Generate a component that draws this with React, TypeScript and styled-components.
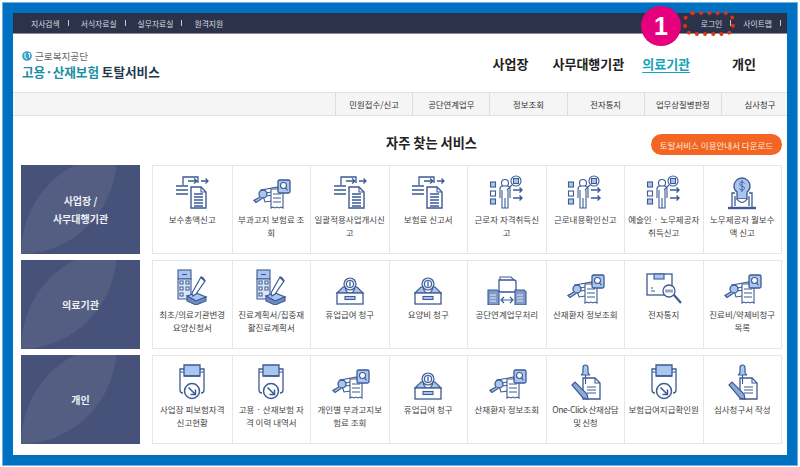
import { FC, ReactNode } from 'react';
import styled, { createGlobalStyle } from 'styled-components';

const INK = '#3d5a94';
const SOFT = '#a8c6f0';

const GlobalStyle = createGlobalStyle`
  html, body {
    margin: 0;
    padding: 0;
    background: #ffffff;
    font-family: 'Noto Sans CJK KR', 'Noto Sans', sans-serif;
  }
  * { box-sizing: border-box; }
`;

const IconSvg: FC<{ children: ReactNode }> = ({ children }) => (
  <svg width="40" height="36" viewBox="0 0 40 36" fill="none" stroke={INK} strokeWidth="1.1">
    {children}
  </svg>
);

const DocsArrow = () => (
  <IconSvg>
    <path d="M11 11V3h15v6" strokeWidth="1.3" />
    <path d="M19 13h10l5 5v16H19z" fill="#fff" strokeWidth="1.4" />
    <path d="M29 13v5h5" />
    <path d="M22 20h9M22 23h9M22 26h9M22 29h9M22 32h9" strokeWidth="1.5" />
    <path d="M4 12h12M4 16h12M4 20h12" strokeWidth="1.5" />
    <path d="M16 7h9m-3-2.500 3 2.500-3 2.500M29 7h7m-2.500-2.500 2.500 2.500-2.500 2.500" strokeWidth="1.3" />
  </IconSvg>
);

const KeyDoc = () => (
  <IconSvg>
    <path d="M10 16l17-3v13l-13 2z" fill="#fff" />
    <path d="M15 19l8-1.500M16 22l8-1.500" />
    <path d="M20 15h12v19l-2-1-2 1-2-1-2 1-2-1-2 1z" fill="#fff" />
    <path d="M22 20h8M22 24h8M22 28h8" />
    <rect x="27" y="6" width="12" height="13" rx="1.500" fill={SOFT} strokeWidth="1.300" />
    <circle cx="32.500" cy="11.500" r="3" fill="#fff" />
    <path d="M34.500 13.800l2 2.500" />
    <circle cx="12" cy="20" r="4" fill={SOFT} strokeWidth="1.300" />
    <path d="M9 23l-6 3.500 2 2 6-4" fill={SOFT} strokeWidth="1.300" />
  </IconSvg>
);

const PersonFlow = () => (
  <IconSvg>
    <rect x="3.500" y="8" width="5" height="5" fill={SOFT} />
    <rect x="3.500" y="17" width="5" height="5" fill="#fff" />
    <rect x="3.500" y="25" width="5" height="5" fill={SOFT} />
    <circle cx="18" cy="9" r="3.500" fill="#fff" />
    <path d="M13 24v-9q0-3 3-3h4q3 0 3 3v9M15 16v18h3V24v10h3V16" fill="#fff" />
    <circle cx="29" cy="7" r="5" fill="#fff" />
    <rect x="26.500" y="4.500" width="5" height="5" fill={SOFT} />
    <path d="M25 11l-5 5" />
    <path d="M26 16h9m-2.500-2.500 2.500 2.500-2.500 2.500M26 24h9m-2.500-2.500 2.500 2.500-2.500 2.500" strokeWidth="1.400" />
  </IconSvg>
);

const MoneyBulb = () => (
  <IconSvg>
    <path d="M6 34h28" strokeWidth="2.400" />
    <path d="M10 33V19h3M30 33V19h-3M13 22v10M27 22v10" fill="#fff" strokeWidth="1.300" />
    <path d="M12 12a8 8 0 1 1 16 0q0 4-3 6v7H15v-7q-3-2-3-6z" fill={SOFT} strokeWidth="1.300" />
    <path d="M15 25q5 7 10 0" fill="#fff" />
    <path d="M22.500 9.500q-.5-1.500-2.500-1.500t-2.500 1.500 2.500 2.500 2.500 2.500-2.500 1.500-2.500-1.500M20 6v12" strokeWidth=".9" />
  </IconSvg>
);

const Building = () => (
  <IconSvg>
    <rect x="6" y="1" width="13" height="9" fill={SOFT} />
    <path d="M10 5.500h5" />
    <path d="M6 10h13v20H6z" fill="#dbe6f6" />
    <path d="M8 12h3v3H8zM14 12h3v3h-3zM8 18h3v3H8zM14 18h3v3h-3zM8 24h3v3H8z" fill="#fff" />
    <path d="M15 27l9-3 10 4-10 4z" fill={SOFT} strokeWidth="1.200" />
    <path d="M15 27v5l9 4 10-4v-4l-10 4z" fill="#6e8cc2" />
    <path d="M20 24l1 3 3-2 9-13-2-3-2-1z" fill="#fff" strokeWidth="1.200" />
    <path d="M29 8l4 4" fill="none" strokeWidth="1.800" />
  </IconSvg>
);

const CoinBox = () => (
  <IconSvg>
    <circle cx="20" cy="15" r="6" fill="#dbe6f6" strokeWidth="1.200" />
    <circle cx="20" cy="15" r="3.500" fill="#fff" />
    <path d="M20 12.500v5" strokeWidth="1.300" />
    <path d="M7 24l6-6h2q1 6 5 6t5-6h2l6 6z" fill={SOFT} strokeWidth="1.200" />
    <rect x="7" y="24" width="26" height="11" fill="#fff" strokeWidth="1.300" />
    <rect x="15" y="27.500" width="10" height="3" fill={SOFT} />
  </IconSvg>
);

const FolderSwap = () => (
  <IconSvg>
    <g transform="translate(0 5)">
      <path d="M13 15V3h11l3 3v9" fill="#fff" />
      <path d="M12 6h15q2 0 2 2v8q0 2-2 2H14q-2 0-2-2z" fill="#fff" strokeWidth="1.300" />
      <path d="M1 16h9l2 2v13H1z" fill="#7e9bcb" />
      <path d="M28 16h9l2 2v13H28z" fill="#7e9bcb" />
      <path d="M3 21h6M3 24h6M3 27h6M30 21h6M30 24h6M30 27h6" stroke="#fff" strokeWidth=".8" />
      <path d="M15 26h10m-8-3-3 3 3 3m6-6 3 3-3 3" strokeWidth="1.200" />
    </g>
  </IconSvg>
);

const ParcelSearch = () => (
  <IconSvg>
    <rect x="3" y="5" width="25" height="21" fill="#fff" strokeWidth="1.300" />
    <rect x="10" y="5" width="10" height="5" fill={SOFT} />
    <path d="M7 22h4M7 19h2" />
    <path d="M30 26l7 8" strokeWidth="2.200" />
    <circle cx="25" cy="22" r="6" fill="#fff" strokeWidth="1.300" />
    <path d="M22 20.500v3M24 20.500v3M26 20.500v3M28 20.500v3" />
  </IconSvg>
);

const PrinterArrow = () => (
  <IconSvg>
    <path d="M12 1h16v11H12z" fill={SOFT} strokeWidth="1.300" />
    <path d="M12 5H8v21q0 3 3 3M28 5h4v21q0 3-3 3" strokeWidth="1.300" />
    <path d="M8 8h4M28 8h4" />
    <path d="M12 12h16" strokeWidth="1.300" />
    <circle cx="20" cy="27" r="7.500" fill="#fff" strokeWidth="1.500" />
    <path d="M16.500 23.500l7 7m0-5v5h-5" strokeWidth="1.500" />
  </IconSvg>
);

const PinDoc = () => (
  <IconSvg>
    <path d="M18 14h12l5 5v16H18z" fill="#fff" strokeWidth="1.300" />
    <path d="M30 14v5h5" />
    <path d="M22 23h9M22 26h9M22 29h9" />
    <path d="M16 11q2-1 2-3V4q0-3 2.500-3T23 4v4q0 2 2 3z" fill={SOFT} strokeWidth="1.200" />
    <path d="M20.500 11v9" />
    <path d="M7 21l3-3 12 12 1 5-5-1z" fill="#8ea9d6" strokeWidth="1.200" />
  </IconSvg>
);

type ServiceItem = { icon: FC; label: string; tight?: boolean };
type ServiceGroup = { title: string[]; items: ServiceItem[] };

const groups: ServiceGroup[] = [
  {
    title: ['사업장 /', '사무대행기관'],
    items: [
      { icon: DocsArrow, label: '보수총액신고' },
      { icon: KeyDoc, label: '부과고지 보험료 조회' },
      { icon: DocsArrow, label: '일괄적용사업개시신고' },
      { icon: DocsArrow, label: '보험료 신고서' },
      { icon: PersonFlow, label: '근로자 자격취득신고' },
      { icon: PersonFlow, label: '근로내용확인신고' },
      { icon: PersonFlow, label: '예술인 · 노무제공자 취득신고' },
      { icon: MoneyBulb, label: '노무제공자 월보수액 신고' },
    ],
  },
  {
    title: ['의료기관'],
    items: [
      { icon: Building, label: '최초/의료기관변경 요양신청서' },
      { icon: Building, label: '진료계획서/집중재활진료계획서' },
      { icon: CoinBox, label: '휴업급여 청구' },
      { icon: CoinBox, label: '요양비 청구' },
      { icon: FolderSwap, label: '공단연계업무처리' },
      { icon: KeyDoc, label: '산재환자 정보조회' },
      { icon: ParcelSearch, label: '전자통지' },
      { icon: KeyDoc, label: '진료비/약제비청구 목록' },
    ],
  },
  {
    title: ['개인'],
    items: [
      { icon: PrinterArrow, label: '사업장 피보험자격 신고현황' },
      { icon: PrinterArrow, label: '고용 · 산재보험 자격 이력 내역서' },
      { icon: KeyDoc, label: '개인별 부과고지보험료 조회' },
      { icon: CoinBox, label: '휴업급여 청구' },
      { icon: KeyDoc, label: '산재환자 정보조회' },
      { icon: PinDoc, label: 'One-Click 산재상담 및 신청', tight: true },
      { icon: PrinterArrow, label: '보험급여지급확인원' },
      { icon: PinDoc, label: '심사청구서 작성' },
    ],
  },
];

const App: FC = () => (
  <Page>
    <GlobalStyle />
    <Frame>
      <TopBar>
        <TopGroup>
          <TopLink>지사검색</TopLink>
          <TopSep />
          <TopLink>서식자료실</TopLink>
          <TopSep />
          <TopLink>실무자료실</TopLink>
          <TopSep />
          <TopLink>원격지원</TopLink>
        </TopGroup>
        <TopGroup>
          <TopLink>로그인</TopLink>
          <TopSep />
          <TopLink>사이트맵</TopLink>
          <TopSep />
        </TopGroup>
        <Badge>1</Badge>
        <DottedMark />
      </TopBar>

      <Header>
        <Logo>
          <LogoTop>
            <svg width="10" height="10" viewBox="0 0 10 10">
              <circle cx="5" cy="5" r="4.800" fill="#3aa0c8" />
              <path d="M3 2v4q0 1.500 2 1.500M6 2.500h1.500v4" stroke="#fff" strokeWidth="1" fill="none" />
            </svg>
            근로복지공단
          </LogoTop>
          <LogoMain>
            <LogoAccent>고용·산재보험</LogoAccent> 토탈서비스
          </LogoMain>
        </Logo>
        <MainNav>
          <MainLink $after={6}>사업장</MainLink>
          <MainLink>사무대행기관</MainLink>
          <MainLink $after={24} $active>
            의료기관
          </MainLink>
          <MainLink>개인</MainLink>
        </MainNav>
      </Header>

      <SubNav>
        <SubItem>민원접수/신고</SubItem>
        <SubItem>공단연계업무</SubItem>
        <SubItem>정보조회</SubItem>
        <SubItem>전자통지</SubItem>
        <SubItem>업무상질병판정</SubItem>
        <SubItem>심사청구</SubItem>
      </SubNav>

      <Content>
        <TitleRow>
          <Title>자주 찾는 서비스</Title>
          <DownloadButton>토탈서비스 이용안내서 다운로드</DownloadButton>
        </TitleRow>
        {groups.map(group => (
          <GroupRow key={group.title.join('')}>
            <GroupPanel>
              {group.title.map(line => (
                <span key={line}>{line}</span>
              ))}
            </GroupPanel>
            <ServiceGrid>
              {group.items.map(({ icon: Icon, label, tight }, i) => (
                <ServiceCell key={i}>
                  <IconSlot>
                    <Icon />
                  </IconSlot>
                  <ServiceLabel $tight={tight}>{label}</ServiceLabel>
                </ServiceCell>
              ))}
            </ServiceGrid>
          </GroupRow>
        ))}
      </Content>
    </Frame>
  </Page>
);

export default App;

const Page = styled.div`
  width: 800px;
  height: 467px;
  padding: 3px;
  overflow: hidden;
`;

const Frame = styled.div`
  width: 794px;
  height: 462px;
  border: 10px solid #0070c0;
  outline: 1px solid #6fb4e4;
  background: #ffffff;
  display: flex;
  flex-direction: column;
`;

const TopBar = styled.div`
  position: relative;
  flex: none;
  height: 21px;
  display: flex;
  align-items: center;
  justify-content: space-between;
  padding: 0 6px 0 18px;
  background: #2b3249;
  border-bottom: 1px solid #8c8f9a;
`;

const TopGroup = styled.div`
  display: flex;
  align-items: center;
`;

const TopLink = styled.span`
  font-size: 7.800px;
  color: #d8dae0;
  white-space: nowrap;
  margin-right: 8px;

  & + span + & {
    margin-left: 12px;
  }
`;

const TopSep = styled.span`
  width: 1px;
  height: 6px;
  background: #c8cad2;
`;

const Badge = styled.div`
  position: absolute;
  left: 628px;
  top: -7px;
  width: 40px;
  height: 40px;
  border-radius: 50%;
  background: #e6007e;
  color: #ffffff;
  display: flex;
  align-items: center;
  justify-content: center;
  font: bold 25px 'Liberation Sans', sans-serif;
`;

const DottedMark = styled.div`
  position: absolute;
  left: 670px;
  top: -2px;
  width: 52px;
  height: 25px;
  border: 4px dotted #e8320e;
  border-radius: 10px;
`;

const Header = styled.div`
  flex: none;
  height: 59px;
  display: flex;
  align-items: flex-start;
  justify-content: space-between;
  padding: 16px 31px 0 9px;
  border-bottom: 1px solid #e2e2e2;
`;

const Logo = styled.div`
  display: flex;
  flex-direction: column;
  gap: 1px;
`;

const LogoTop = styled.div`
  display: flex;
  align-items: center;
  gap: 3px;
  font-size: 9.600px;
  line-height: 12px;
  color: #666666;
`;

const LogoMain = styled.div`
  font-size: 12.600px;
  line-height: 17px;
  font-weight: 700;
  color: #22384a;
  white-space: nowrap;
`;

const LogoAccent = styled.span`
  color: #1b8ea3;
`;

const MainNav = styled.nav`
  display: flex;
  align-items: center;
  height: 28px;
  gap: 18px;
`;

const MainLink = styled.a<{ $active?: boolean; $after?: number }>`
  font-size: 13px;
  font-weight: 700;
  line-height: 16px;
  white-space: nowrap;
  color: ${props => (props.$active ? '#16a3b8' : '#222222')};
  text-decoration: ${props => (props.$active ? 'underline' : 'none')};
  text-underline-offset: 3px;
  margin-right: ${props => props.$after ?? 0}px;
`;

const SubNav = styled.div`
  flex: none;
  height: 23px;
  display: flex;
  overflow: hidden;
  padding-left: 322px;
  background: #f5f5f5;
  border-bottom: 1px solid #e2e2e2;
`;

const SubItem = styled.div`
  flex: none;
  width: 77.200px;
  display: flex;
  align-items: center;
  justify-content: center;
  border-left: 1px solid #dddddd;
  font-size: 8.400px;
  color: #333333;
  white-space: nowrap;
`;

const Content = styled.div`
  flex: 1;
  display: flex;
  flex-direction: column;
  gap: 6px;
  padding: 0 5px 0 8px;
`;

const TitleRow = styled.div`
  position: relative;
  height: 43px;
  display: flex;
  align-items: flex-start;
  justify-content: center;
  padding: 18px 0 0 60px;
`;

const Title = styled.h2`
  margin: 0;
  font-size: 13.200px;
  line-height: 18px;
  font-weight: 700;
  color: #222222;
`;

const DownloadButton = styled.a`
  position: absolute;
  right: 0;
  top: 18px;
  width: 131px;
  height: 21px;
  border-radius: 11px;
  background: #f26522;
  color: #ffe9dc;
  font-size: 8.500px;
  display: flex;
  align-items: center;
  justify-content: center;
  white-space: nowrap;
`;

const GroupRow = styled.div`
  display: flex;
  gap: 12px;
  height: 89px;
`;

const GroupPanel = styled.div`
  position: relative;
  overflow: hidden;
  flex: none;
  width: 119px;
  display: flex;
  flex-direction: column;
  align-items: center;
  justify-content: center;
  gap: 8px;
  background: #47527a;
  color: #eef0f5;
  font-size: 10px;
  font-weight: 700;
  line-height: 10px;

  &::before {
    content: '';
    position: absolute;
    left: 0;
    top: -10px;
    width: 96px;
    height: 99px;
    border-radius: 100% 0 100% 0;
    background: rgba(255, 255, 255, 0.07);
  }

  span {
    position: relative;
  }
`;

const ServiceGrid = styled.div`
  flex: 1;
  display: grid;
  grid-template-columns: repeat(8, 1fr);
  border: 1px solid #e6e6e6;
`;

const ServiceCell = styled.div`
  display: flex;
  flex-direction: column;
  align-items: center;
  padding: 7px 3px 0;
  border-left: 1px solid #e6e6e6;

  &:first-child {
    border-left: 0;
  }
`;

const IconSlot = styled.div`
  height: 37px;
  display: flex;
  align-items: center;
  justify-content: center;
`;

const ServiceLabel = styled.div<{ $tight?: boolean }>`
  margin-top: 3px;
  font-size: 8.500px;
  line-height: 12.500px;
  letter-spacing: ${props => (props.$tight ? '-0.4px' : '0')};
  color: #444444;
  text-align: center;
  word-break: break-all;
`;
